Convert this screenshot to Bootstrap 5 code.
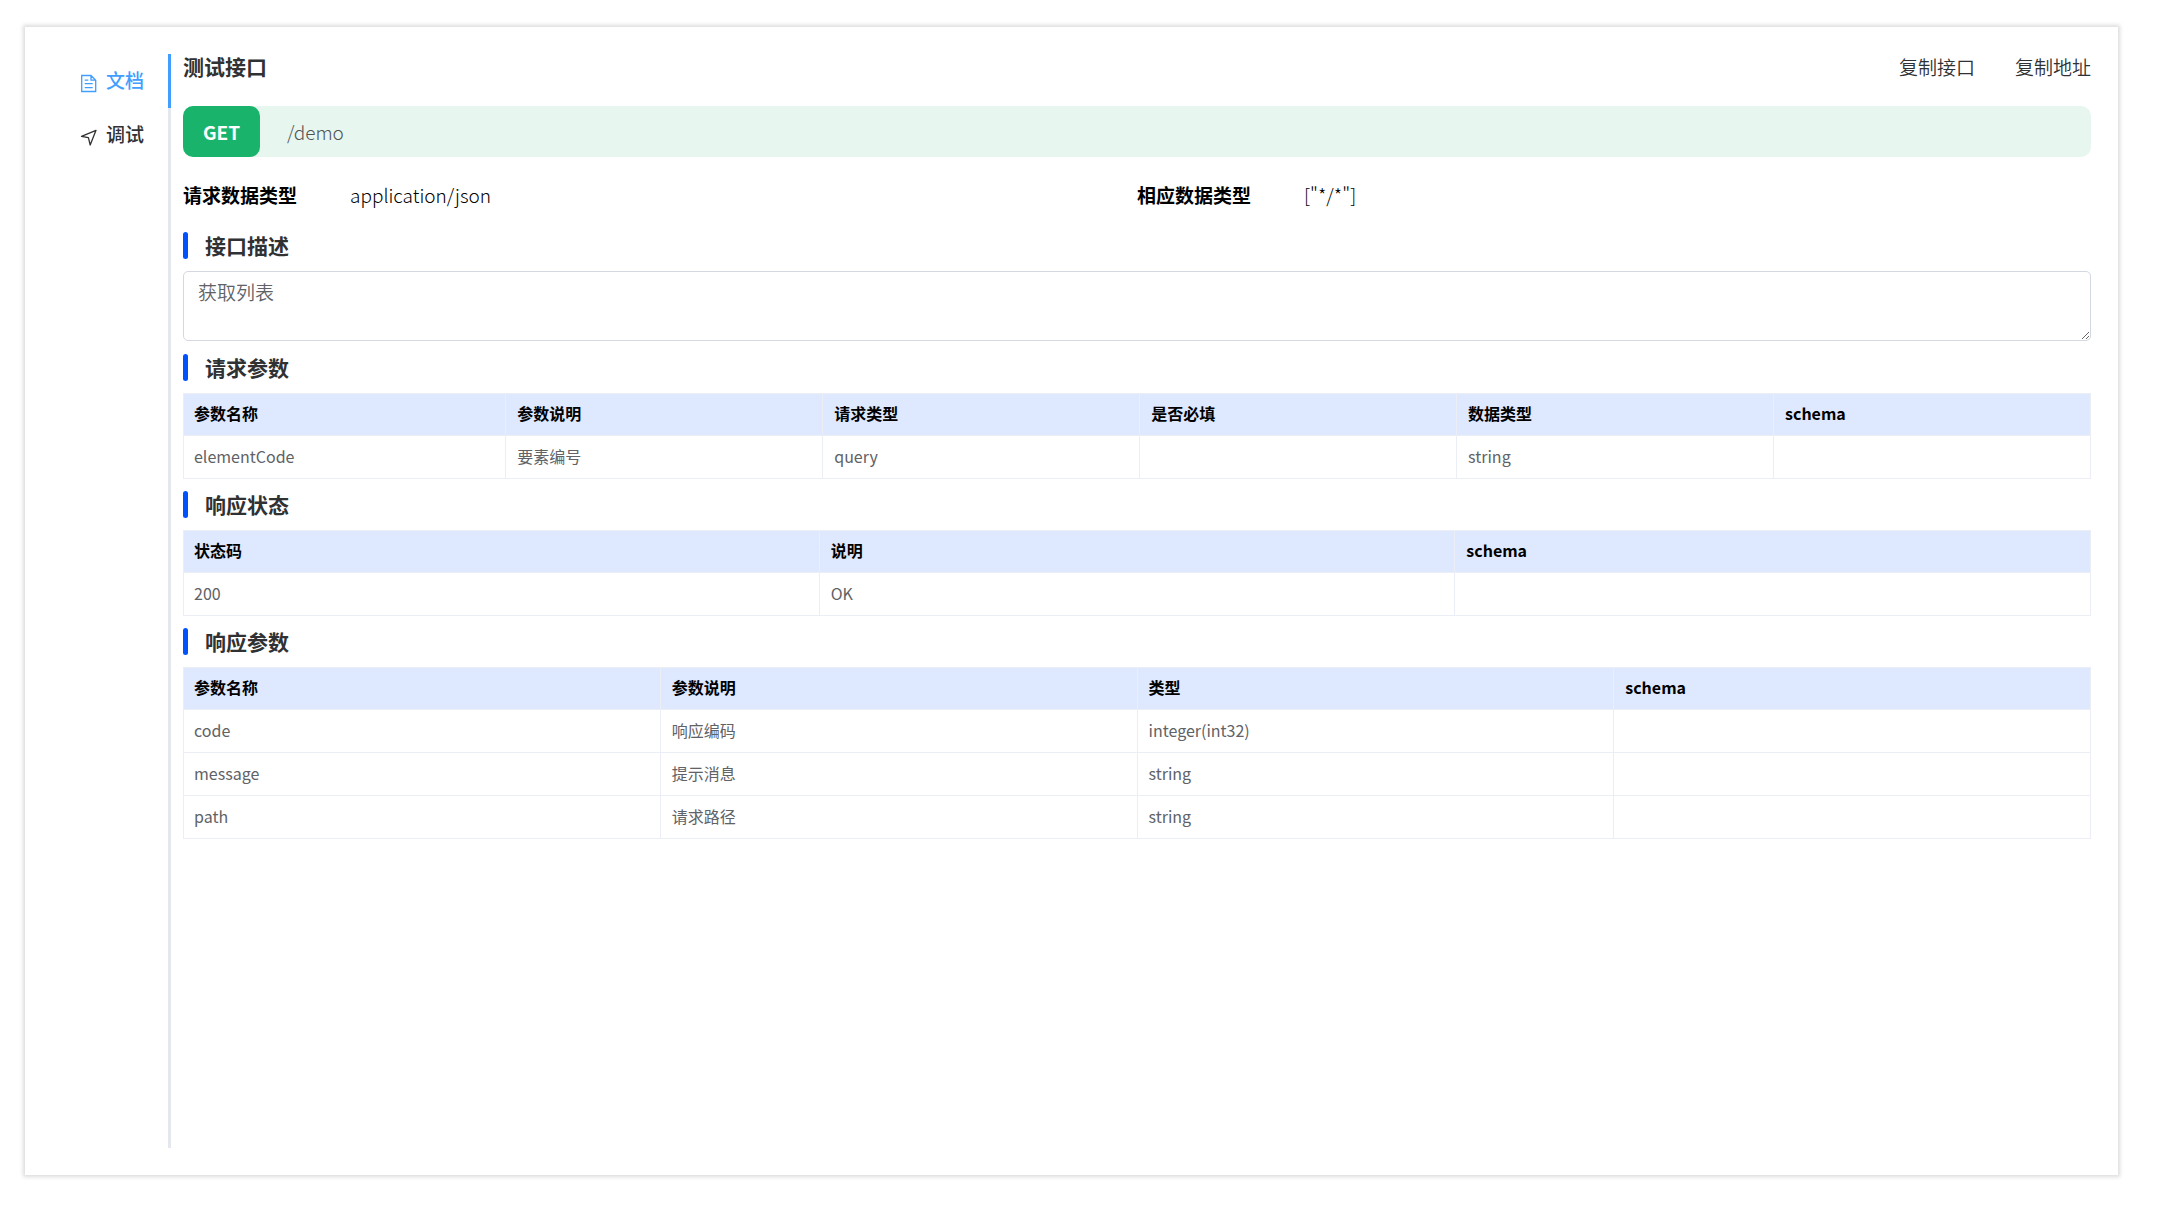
<!DOCTYPE html>
<html lang="zh-CN">
<head>
<meta charset="utf-8">
<meta name="viewport" content="width=device-width, initial-scale=1">
<title>测试接口</title>
<link href="https://cdn.jsdelivr.net/npm/bootstrap@5.3.0/dist/css/bootstrap.min.css" rel="stylesheet">
<style>
  body { font-family: "Noto Sans CJK SC", sans-serif; font-size: 19px; line-height: 26px; color: #303133; background: #fff; }
  .doc-page { min-height: 100vh; padding: 27px 40px 47px 25px; }
  .doc-panel { padding: 27px; box-shadow: 0 0 4px 2px rgba(0, 0, 0, .14); }
  .side-tabs { width: 119px; margin-right: 12px; border-right: 3px solid #e4e7ed; }
  .side-tabs a { height: 54px; gap: 9px; padding: 0 24px 2px 0; margin-right: -3px; border-right: 3px solid transparent; color: #303133; text-decoration: none; font-weight: 500; }
  .side-tabs a.active { color: #409eff; border-right-color: #409eff; }
  .side-tabs svg { width: 17px; height: 19px; margin-top: 7px; }
  .doc-title { font-size: 21px; line-height: 24px; padding-bottom: 2px; font-weight: 700; }
  .copy-actions { gap: 40px; }
  .copy-btn { padding: 0; border: 0; background: none; color: #303133; font-weight: 350; line-height: 26px; }
  .url-bar { height: 51px; margin-top: 26px; border-radius: 10px; background: #e7f6ee; color: #505255; font-weight: 300; }
  .verb-tag { width: 77px; border-radius: 10px; background: #19b36b; color: #fff; font-weight: 700; }
  .url-path { margin-left: 27px; }
  .type-row { margin-top: 25px; color: #000; font-weight: 300; }
  .type-row dt { font-weight: 700; margin-right: 53px; }
  .type-row dd { margin: 0; }
  .sect-head { display: flex; align-items: center; height: 27px; margin: 12px 0; font-size: 21px; line-height: 24px; font-weight: 700; color: #303133; }
  .sect-head span { padding-bottom: 2px; }
  .type-row + .sect-head { margin-top: 24px; }
  .desc-box + .sect-head { margin-top: 13px; }
  .sect-head::before { content: ""; width: 5px; height: 27px; margin-right: 17px; border-radius: 3px; background: #0052ff; }
  .desc-box { display: block; height: 70px; padding: 7px 14px; border: 1px solid #d4d8e0; border-radius: 5px; color: #606266; font-size: 19px; line-height: 26px; font-weight: 350; }
  .param-grid { width: 100%; table-layout: fixed; border-collapse: separate; border-spacing: 0; border-top: 1px solid #ebeef5; border-left: 1px solid #ebeef5; font-size: 16px; line-height: 24px; color: #606266; }
  .param-grid th, .param-grid td { height: 43px; padding: 0 10px 2px 11px; border-right: 1px solid #ebeef5; border-bottom: 1px solid #ebeef5; }
  .param-grid th:first-child, .param-grid td:first-child { padding-left: 10px; }
  .param-grid th { height: 42px; padding-bottom: 4px; background: #dee8ff; color: #000; font-weight: 700; }
</style>
<script src="https://cdn.jsdelivr.net/npm/bootstrap@5.3.0/dist/js/bootstrap.bundle.min.js"></script>
</head>
<body>
<div class="doc-page d-flex">
  <div class="doc-panel d-flex flex-grow-1">
    <nav class="side-tabs d-flex flex-column flex-shrink-0">
      <a href="#doc" class="active d-flex align-items-center justify-content-end">
        <svg viewBox="0 0 17 19" fill="none" stroke="currentColor" stroke-width="1.3"><path d="M11 1.5H1.7v16h14V6.2zM11 1.5v4.7h4.7M4.7 6.2h3.6M4.7 9.7h8M4.7 13.7h8"/></svg>
        <span>文档</span>
      </a>
      <a href="#debug" class="d-flex align-items-center justify-content-end">
        <svg viewBox="0 0 17 19" fill="none" stroke="currentColor" stroke-width="1.3" stroke-linejoin="round"><path d="M1.5 8.3 16 2.3 10.2 17 8.4 9.7z"/></svg>
        <span>调试</span>
      </a>
    </nav>
    <main class="flex-grow-1" id="doc">
      <header class="d-flex justify-content-between align-items-center">
        <h1 class="doc-title mb-0">测试接口</h1>
        <div class="copy-actions d-flex">
          <button type="button" class="copy-btn">复制接口</button>
          <button type="button" class="copy-btn">复制地址</button>
        </div>
      </header>
      <div class="url-bar d-flex">
        <span class="verb-tag d-flex align-items-center justify-content-center">GET</span>
        <span class="url-path align-self-center">/demo</span>
      </div>
      <div class="type-row row g-0">
        <dl class="col-6 d-flex mb-0"><dt>请求数据类型</dt><dd>application/json</dd></dl>
        <dl class="col-6 d-flex mb-0"><dt>相应数据类型</dt><dd>["*/*"]</dd></dl>
      </div>
      <h2 class="sect-head"><span id="desc-label">接口描述</span></h2>
      <textarea class="desc-box w-100" aria-labelledby="desc-label">获取列表</textarea>

      <h2 class="sect-head"><span>请求参数</span></h2>
      <table class="param-grid">
        <colgroup><col style="width:16.9%"><col><col><col><col><col></colgroup>
        <thead><tr><th>参数名称</th><th>参数说明</th><th>请求类型</th><th>是否必填</th><th>数据类型</th><th>schema</th></tr></thead>
        <tbody><tr><td>elementCode</td><td>要素编号</td><td>query</td><td></td><td>string</td><td></td></tr></tbody>
      </table>

      <h2 class="sect-head"><span>响应状态</span></h2>
      <table class="param-grid">
        <thead><tr><th>状态码</th><th>说明</th><th>schema</th></tr></thead>
        <tbody><tr><td>200</td><td>OK</td><td></td></tr></tbody>
      </table>

      <h2 class="sect-head"><span>响应参数</span></h2>
      <table class="param-grid">
        <thead><tr><th>参数名称</th><th>参数说明</th><th>类型</th><th>schema</th></tr></thead>
        <tbody>
          <tr><td>code</td><td>响应编码</td><td>integer(int32)</td><td></td></tr>
          <tr><td>message</td><td>提示消息</td><td>string</td><td></td></tr>
          <tr><td>path</td><td>请求路径</td><td>string</td><td></td></tr>
        </tbody>
      </table>
    </main>
  </div>
</div>
</body>
</html>
